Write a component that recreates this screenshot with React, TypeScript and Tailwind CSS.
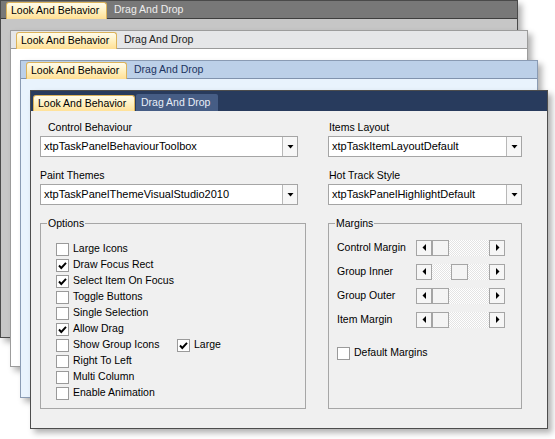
import React from 'react';

const font = "font-['Liberation_Sans',Arial,sans-serif]";

interface WinProps {
  className: string;
  barClass: string;
  bodyClass: string;
  activeClass: string;
  inactiveClass: string;
  barHeight: string;
  children?: React.ReactNode;
}

const TabWindow: React.FC<WinProps> = ({
  className,
  barClass,
  bodyClass,
  activeClass,
  inactiveClass,
  barHeight,
  children,
}) => (
  <div className={`absolute flex flex-col w-[518px] shadow-[4px_4px_6px_rgba(0,0,0,0.3)] ${className}`}>
    <div className={`flex items-end shrink-0 ${barHeight} ${barClass}`}>
      <div
        className={`h-full -mb-px flex items-center rounded-t-[3px] border border-b-0 border-[#dcb35a] bg-gradient-to-b from-[#fffcec] via-[#fff0bf] to-[#ffdf93] text-black ${activeClass}`}
      >
        Look And Behavior
      </div>
      <div className={`flex items-center ${inactiveClass}`}>Drag And Drop</div>
    </div>
    <div className={`flex-1 ${bodyClass}`}>{children}</div>
  </div>
);

const Check: React.FC<{ checked?: boolean; label: string }> = ({ checked, label }) => (
  <div className="flex items-center h-4">
    <div className="w-[13px] h-[13px] border border-[#9a9a9a] bg-white flex items-center justify-center shrink-0">
      {checked && (
        <svg width="11" height="11" viewBox="0 0 11 11">
          <polyline points="2,5.5 4.3,8 9,2.8" fill="none" stroke="#000" strokeWidth="1.9" />
        </svg>
      )}
    </div>
    <span className="ml-[4px] whitespace-nowrap">{label}</span>
  </div>
);

const Combo: React.FC<{ value: string; w: string }> = ({ value, w }) => (
  <div className={`flex h-[21px] border border-[#a5a5a5] bg-white ${w}`}>
    <div className="flex-1 flex items-center pl-[3px] text-[11px] whitespace-nowrap overflow-hidden">{value}</div>
    <div className="w-[15px] border-l border-[#b8b8b8] bg-[#f7f7f7] flex items-center justify-center">
      <svg width="7" height="4" viewBox="0 0 7 4">
        <polygon points="0.5,0 6.5,0 3.5,3.5" fill="#000" />
      </svg>
    </div>
  </div>
);

const Arrow: React.FC<{ dir: 'l' | 'r' }> = ({ dir }) => (
  <div className="w-[16px] h-full border border-[#a5a5a5] bg-[#f6f6f6] flex items-center justify-center shrink-0">
    <svg width="5" height="8" viewBox="0 0 5 8">
      {dir === 'l' ? (
        <polygon points="4,0 4,7 0.5,3.5" fill="#000" />
      ) : (
        <polygon points="1,0 1,7 4.5,3.5" fill="#000" />
      )}
    </svg>
  </div>
);

const ScrollRow: React.FC<{ label: string; offset: string }> = ({ label, offset }) => (
  <div className="flex items-center h-4">
    <span className="w-[79px] whitespace-nowrap">{label}</span>
    <div className="flex h-4 w-[89px] bg-[repeating-conic-gradient(#ffffff_0%_25%,#e4e4e4_0%_50%)] bg-[length:2px_2px]">
      <Arrow dir="l" />
      <div className={`w-[17px] h-full border border-[#a5a5a5] bg-[#f4f4f4] shrink-0 ${offset}`} />
      <div className="flex-1" />
      <Arrow dir="r" />
    </div>
  </div>
);

const Group: React.FC<{ title: string; className: string; children: React.ReactNode }> = ({
  title,
  className,
  children,
}) => (
  <div className={`relative border border-[#a6a6a6] ${className}`}>
    <span className="absolute left-[6px] top-[-8px] px-[1px] leading-[14px] bg-[#f0f0f0]">{title}</span>
    {children}
  </div>
);

export default function App() {
  return (
    <div className={`relative w-[555px] h-[439px] bg-white overflow-hidden text-[10.5px] text-black ${font}`}>
      <TabWindow
        className="left-0 top-0 h-[338px] border border-[#4a4a4a]"
        barHeight="h-[18px]"
        barClass="bg-[#787878] pl-[5px] border-b border-[#3e3e3e]"
        bodyClass="bg-[#c6c6c6]"
        activeClass="w-[101px] pl-[4px]"
        inactiveClass="pl-[7px] h-full text-[#eeeeee]"
      />
      <TabWindow
        className="left-[10px] top-[30px] h-[337px] border border-[#9c9c9c]"
        barHeight="h-[18px]"
        barClass="bg-[#e5e6e8] pl-[5px] border-b border-[#9a9a9a]"
        bodyClass="bg-white"
        activeClass="w-[101px] pl-[4px]"
        inactiveClass="pl-[7px] h-full text-[#222222]"
      />
      <TabWindow
        className="left-[20px] top-[60px] h-[338px] border border-[#8a9bb3]"
        barHeight="h-[18px]"
        barClass="bg-[#bcd0e8] pl-[5px] border-b border-[#8193ad]"
        bodyClass="bg-[#e9f3fd]"
        activeClass="w-[101px] pl-[4px]"
        inactiveClass="pl-[7px] h-full text-[#1d3461]"
      />
      <TabWindow
        className="left-[30px] top-[90px] h-[339px] border border-[#4d4d4d]"
        barHeight="h-[20px]"
        barClass="bg-[#283b5d] pl-[2px] pt-[3px]"
        bodyClass="bg-[#f0f0f0] pl-[9px] pt-[9px]"
        activeClass="w-[102px] pl-[4px]"
        inactiveClass="ml-[1px] w-[82px] pl-[5px] h-full bg-[#465d85] text-[#e8eef8] rounded-t-[2px]"
      >
        <div className="flex">
          <div className="w-[266px] flex flex-col">
            <span className="pl-[8px] leading-[14px]">Control Behaviour</span>
            <div className="mt-[2px]">
              <Combo value="xtpTaskPanelBehaviourToolbox" w="w-[258px]" />
            </div>
            <span className="mt-[11px] leading-[14px]">Paint Themes</span>
            <div className="mt-[2px]">
              <Combo value="xtpTaskPanelThemeVisualStudio2010" w="w-[258px]" />
            </div>
            <Group title="Options" className="mt-[18px] h-[186px] pl-[15px] pt-[17px]">
              <Check label="Large Icons" />
              <Check checked label="Draw Focus Rect" />
              <Check checked label="Select Item On Focus" />
              <Check label="Toggle Buttons" />
              <Check label="Single Selection" />
              <Check checked label="Allow Drag" />
              <div className="flex">
                <div className="w-[121px]">
                  <Check label="Show Group Icons" />
                </div>
                <Check checked label="Large" />
              </div>
              <Check label="Right To Left" />
              <Check label="Multi Column" />
              <Check label="Enable Animation" />
            </Group>
          </div>
          <div className="ml-[22px] w-[194px] flex flex-col">
            <span className="pl-[1px] leading-[14px]">Items Layout</span>
            <div className="mt-[2px]">
              <Combo value="xtpTaskItemLayoutDefault" w="w-[194px]" />
            </div>
            <span className="mt-[11px] pl-[1px] leading-[14px]">Hot Track Style</span>
            <div className="mt-[2px]">
              <Combo value="xtpTaskPanelHighlightDefault" w="w-[194px]" />
            </div>
            <Group title="Margins" className="mt-[18px] h-[186px] pl-[8px] pt-[16px]">
              <div className="flex flex-col gap-[8px]">
                <ScrollRow label="Control Margin" offset="" />
                <ScrollRow label="Group Inner" offset="ml-[19px]" />
                <ScrollRow label="Group Outer" offset="" />
                <ScrollRow label="Item Margin" offset="" />
              </div>
              <div className="mt-[17px]">
                <Check label="Default Margins" />
              </div>
            </Group>
          </div>
        </div>
      </TabWindow>
    </div>
  );
}
